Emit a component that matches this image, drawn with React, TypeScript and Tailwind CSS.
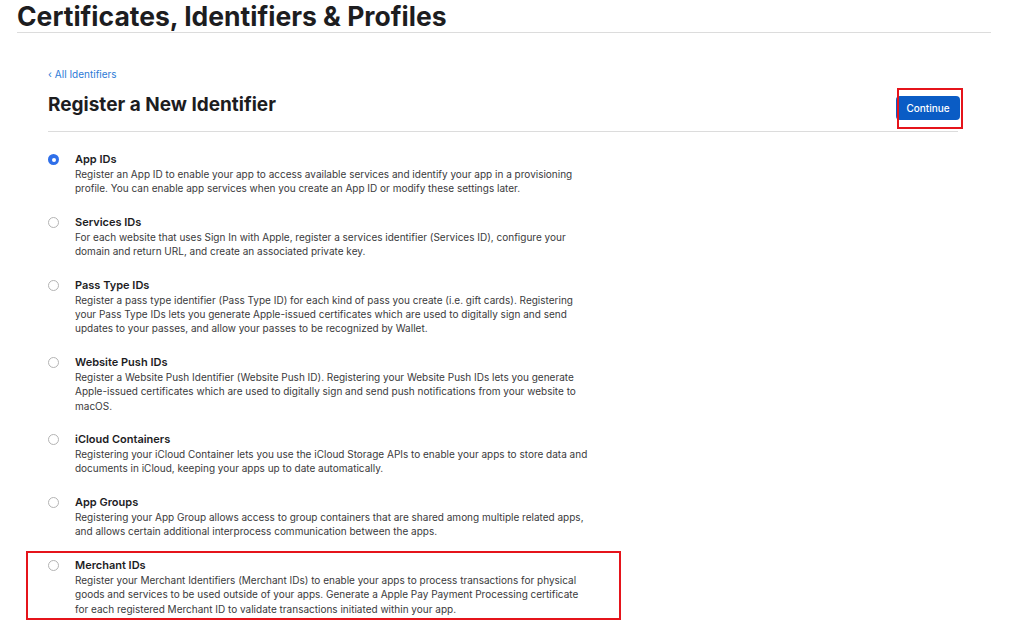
import React from "react";

type Item = { title: string; lines: string[]; selected?: boolean; highlight?: boolean };

const items: Item[] = [
  {
    title: "App IDs",
    selected: true,
    lines: [
      "Register an App ID to enable your app to access available services and identify your app in a provisioning",
      "profile. You can enable app services when you create an App ID or modify these settings later.",
    ],
  },
  {
    title: "Services IDs",
    lines: [
      "For each website that uses Sign In with Apple, register a services identifier (Services ID), configure your",
      "domain and return URL, and create an associated private key.",
    ],
  },
  {
    title: "Pass Type IDs",
    lines: [
      "Register a pass type identifier (Pass Type ID) for each kind of pass you create (i.e. gift cards). Registering",
      "your Pass Type IDs lets you generate Apple-issued certificates which are used to digitally sign and send",
      "updates to your passes, and allow your passes to be recognized by Wallet.",
    ],
  },
  {
    title: "Website Push IDs",
    lines: [
      "Register a Website Push Identifier (Website Push ID). Registering your Website Push IDs lets you generate",
      "Apple-issued certificates which are used to digitally sign and send push notifications from your website to",
      "macOS.",
    ],
  },
  {
    title: "iCloud Containers",
    lines: [
      "Registering your iCloud Container lets you use the iCloud Storage APIs to enable your apps to store data and",
      "documents in iCloud, keeping your apps up to date automatically.",
    ],
  },
  {
    title: "App Groups",
    lines: [
      "Registering your App Group allows access to group containers that are shared among multiple related apps,",
      "and allows certain additional interprocess communication between the apps.",
    ],
  },
  {
    title: "Merchant IDs",
    highlight: true,
    lines: [
      "Register your Merchant Identifiers (Merchant IDs) to enable your apps to process transactions for physical",
      "goods and services to be used outside of your apps. Generate a Apple Pay Payment Processing certificate",
      "for each registered Merchant ID to validate transactions initiated within your app.",
    ],
  },
];

function Radio({ selected }: { selected?: boolean }) {
  if (selected) {
    return (
      <span className="mt-[2px] flex h-[11px] w-[11px] shrink-0 items-center justify-center rounded-full bg-[#2f6fe9]">
        <span className="h-[4px] w-[4px] rounded-full bg-white" />
      </span>
    );
  }
  return <span className="mt-[2px] h-[11px] w-[11px] shrink-0 rounded-full border border-[#b4b4b4] bg-white" />;
}

export default function App() {
  return (
    <div className="min-h-screen bg-white font-['Inter',sans-serif] text-[#1d1d1f]">
      <div className="pl-[17px] pr-[33px]">
        <h1 className="text-[26.5px] font-bold leading-[32px]">Certificates, Identifiers &amp; Profiles</h1>
        <div className="h-px bg-[#dcdcdc]" />
      </div>

      <div className="ml-[48px] w-[910px]">
        <div className="mt-[35px] text-[10px] leading-[12px] text-[#2d7ad6]">
          <span className="mr-[3px]">‹</span>All Identifiers
        </div>
        <div className="mt-[13px] flex items-start justify-between">
          <h2 className="text-[19px] font-bold leading-[24px]">Register a New Identifier</h2>
          <div className="relative mr-[-2px] mt-[3px]">
            <button className="block h-[24px] w-[64px] rounded-[4px] bg-[#0a5cc5] text-[10px] font-medium text-white">
              Continue
            </button>
            <span className="pointer-events-none absolute left-[1px] top-[-8px] h-[41px] w-[66px] border-2 border-[#e5141b]" />
          </div>
        </div>
        <div className="mt-[11px] h-px bg-[#dcdcdc]" />

        <div className="mt-[20px] flex flex-col gap-[19px]">
          {items.map((it) => (
            <div key={it.title} className="relative flex gap-[16px]">
              <Radio selected={it.selected} />
              <div className="flex flex-col">
                <div className="text-[11px] font-semibold leading-[15px] text-[#1d1d1f]">{it.title}</div>
                <div className="text-[10px] leading-[14.4px] text-[#3a3a3c]">
                  {it.lines.map((l, i) => (
                    <div key={i} className="whitespace-nowrap">
                      {l}
                    </div>
                  ))}
                </div>
              </div>
              {it.highlight && (
                <span className="pointer-events-none absolute left-[-22px] top-[-7px] h-[69px] w-[595px] border-2 border-[#e5141b]" />
              )}
            </div>
          ))}
        </div>
      </div>
    </div>
  );
}
